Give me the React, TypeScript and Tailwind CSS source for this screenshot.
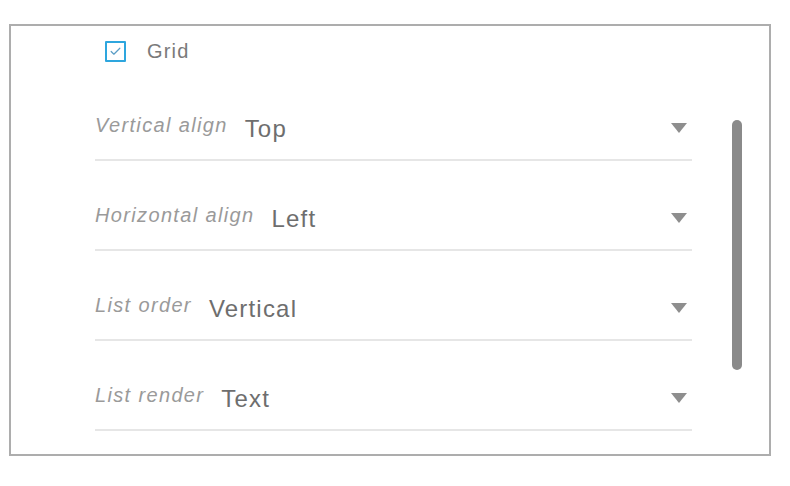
import { Check } from "lucide-react"

const rows = [
  { label: "Vertical align", value: "Top" },
  { label: "Horizontal align", value: "Left" },
  { label: "List order", value: "Vertical" },
  { label: "List render", value: "Text" },
]

function Caret() {
  return (
    <svg width="16" height="10" viewBox="0 0 16 10" className="self-center mr-[5px] mb-[1px]">
      <path d="M0 0 H16 L8 10 Z" fill="#8e8e8e" />
    </svg>
  )
}

export default function App() {
  return (
    <div className="min-h-screen bg-white pt-[24px] pl-[9px] font-['Liberation_Sans',Arial,sans-serif]">
      <div className="flex w-[762px] h-[432px] border-2 border-[#adadad] bg-white">
        <div className="w-[597px] ml-[84px] flex flex-col">
          <label className="flex items-center mt-[15px] ml-[10px] h-[20px]">
            <span className="flex items-center justify-center w-[21px] h-[21px] border-[2.5px] border-[#2ea6de] rounded-[1px]">
              <Check className="w-[13px] h-[13px] text-[#5b9ec6]" strokeWidth={2.25} />
            </span>
            <span className="ml-[21px] text-[20px] leading-none tracking-[1.2px] text-[#7a7a7a]">Grid</span>
          </label>

          <div className="mt-[10px]">
            {rows.map((row) => (
              <div key={row.label} className="pt-[44px]">
                <div className="flex items-end pb-[18px] border-b-2 border-[#e6e6e6]">
                  <span className="pb-[6px] text-[20px] leading-none italic tracking-[1.35px] text-[#9a9a9a]">
                    {row.label}
                  </span>
                  <span className="ml-[17px] text-[24px] leading-none tracking-[1.2px] text-[#6e6e6e]">
                    {row.value}
                  </span>
                  <div className="flex-1" />
                  <Caret />
                </div>
              </div>
            ))}
          </div>
        </div>

        <div className="ml-[40px] mt-[94px] w-[10px] h-[250px] rounded-full bg-[#8a8a8a]" />
      </div>
    </div>
  )
}
